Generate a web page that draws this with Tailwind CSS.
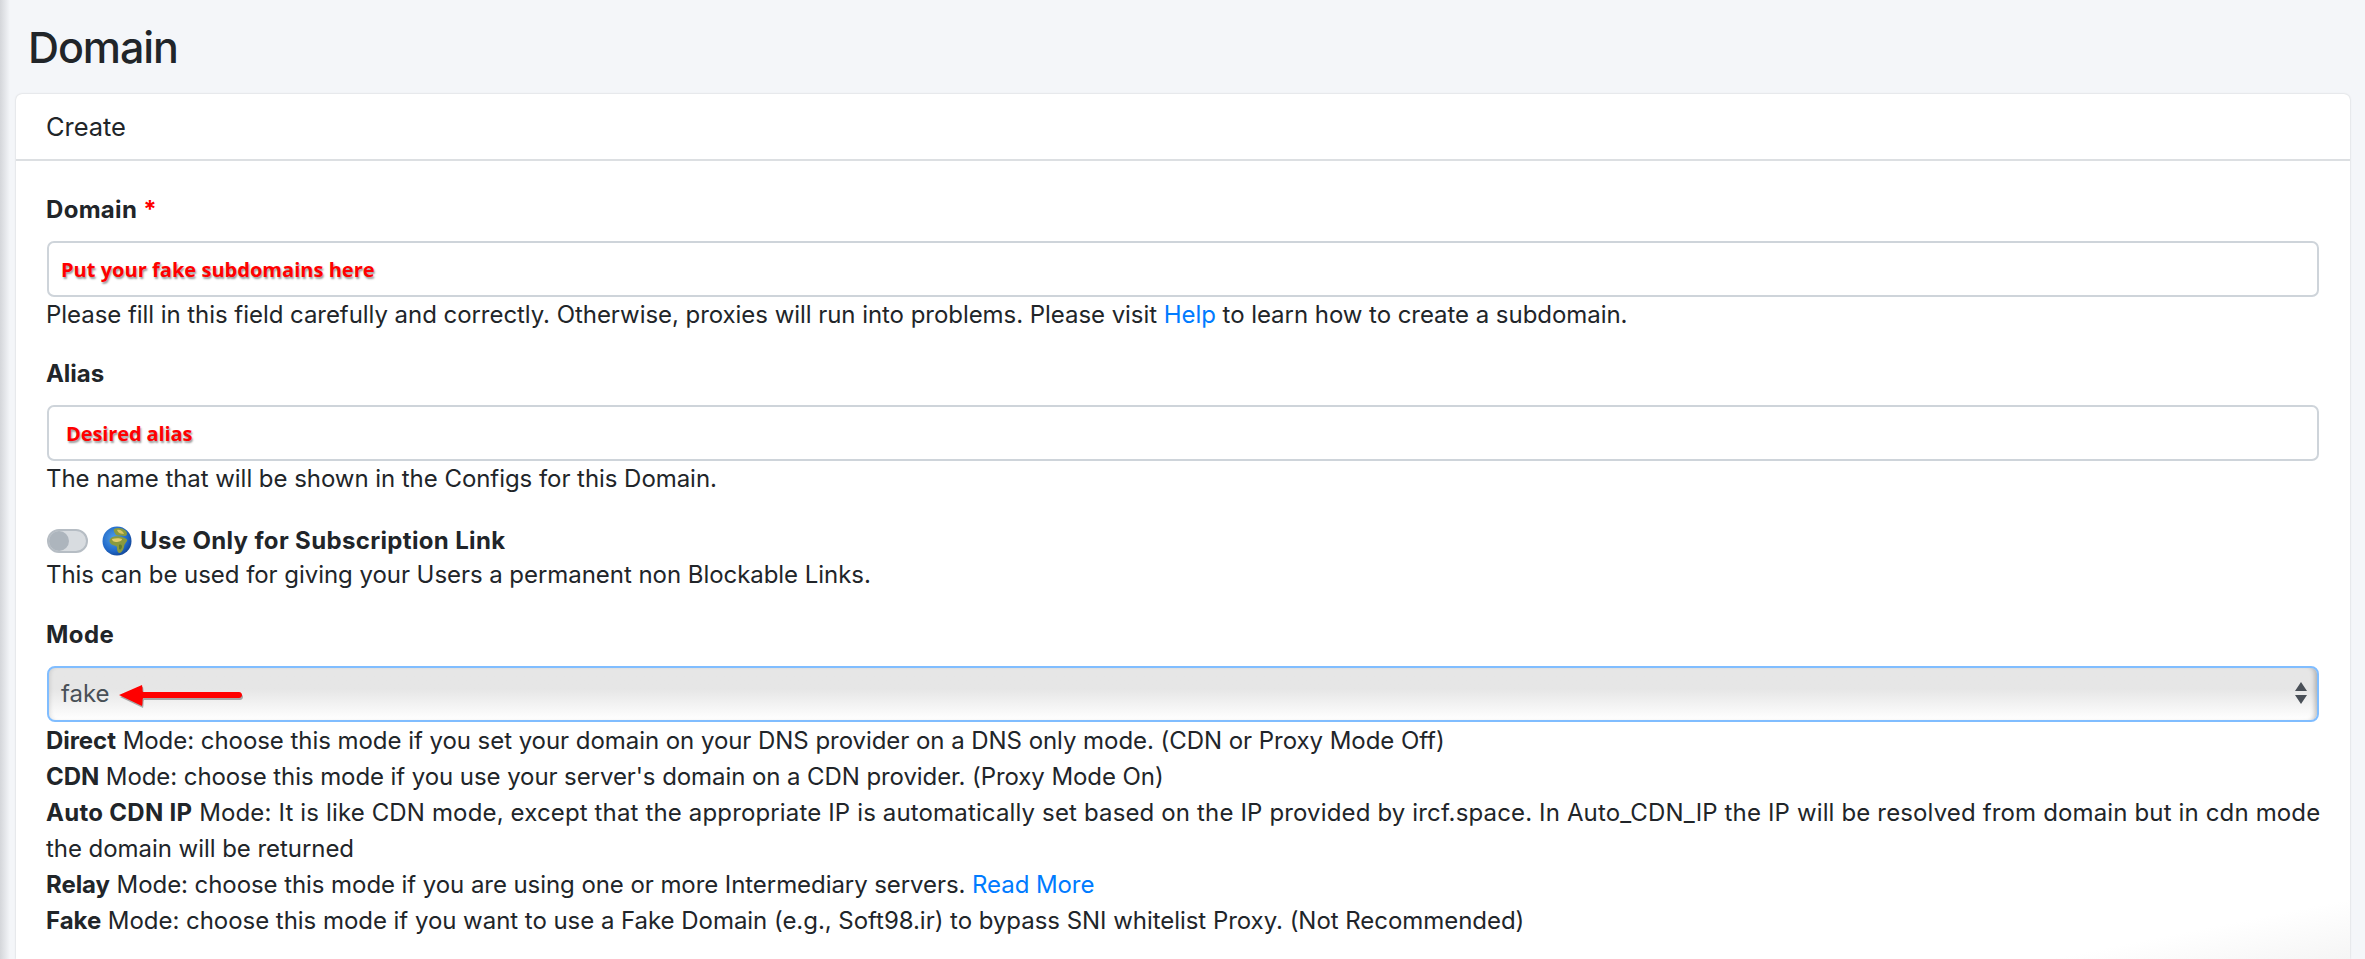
<!DOCTYPE html>
<html lang="en">
<head>
  <meta charset="UTF-8" />
  <title>Domain</title>
  <script src="https://cdn.jsdelivr.net/npm/@tailwindcss/browser@4"></script>
</head>
<body class="relative w-[2365px] h-[959px] overflow-hidden bg-[#f4f6f9] text-[#212529] font-['Inter',sans-serif] text-[24px] leading-[36px] tracking-[-0.05px]">
  <!-- sidebar shadow on the left edge -->
  <div class="absolute left-0 top-0 h-full w-[10px] bg-gradient-to-r from-[#d4d6da] to-[#f4f6f9]"></div>

  <div class="relative pl-[16px] pr-[15px]">
    <h1 class="pl-[12px] pt-[22px] h-[94px] text-[43px] leading-[50px] font-medium tracking-[-1.1px]">Domain</h1>

    <div class="relative h-[865px] rounded-t-[6px] bg-white shadow-[0_0_2px_rgba(0,0,0,0.2)] overflow-hidden">
      <!-- faint shade in the bottom right corner -->
      <div class="absolute right-0 bottom-0 w-[300px] h-[60px] bg-gradient-to-tl from-[#f5f5f5] to-white/0 to-50%"></div>

      <div class="h-[67px] border-b-2 border-[#dcdfe2] pl-[30px] flex items-center text-[25.5px]">Create</div>

      <div class="relative pl-[30px] pr-[31px]">
        <label class="block mt-[31px] font-bold leading-[36px] tracking-[0.3px]">Domain <span class="text-[#f00]">*</span></label>
        <div class="mt-[13px] ml-[1px] h-[56px] rounded-[7px] border-2 border-[#ced4da] flex items-center pl-[12px]">
          <span class="relative top-[1px] font-['Open_Sans',sans-serif] font-bold text-[20px] tracking-[0.03px] text-[#f00] [text-shadow:1px_2px_2px_rgba(0,0,0,0.4)]">Put your fake subdomains here</span>
        </div>
        <p>Please fill in this field carefully and correctly. Otherwise, proxies will run into problems. Please visit <a class="text-[#007bff]">Help</a> to learn how to create a subdomain.</p>

        <label class="block mt-[23px] font-bold">Alias</label>
        <div class="mt-[13px] ml-[1px] h-[56px] rounded-[7px] border-2 border-[#ced4da] flex items-center pl-[17px]">
          <span class="relative top-[1px] font-['Open_Sans',sans-serif] font-bold text-[20px] tracking-[-0.1px] text-[#f00] [text-shadow:1px_2px_2px_rgba(0,0,0,0.4)]">Desired alias</span>
        </div>
        <p>The name that will be shown in the Configs for this Domain.</p>

        <div class="mt-[26px] ml-[1px] flex items-center h-[36px]">
          <span class="relative block w-[41px] h-[24px] rounded-full bg-[#d8dce0] border-2 border-[#b6bdc4]">
            <span class="absolute left-0 top-0 w-[20px] h-[20px] rounded-full bg-[#adb5bd]"></span>
          </span>
          <svg class="ml-[14px] w-[30px] h-[30px]" viewBox="0 0 30 30">
            <defs>
              <radialGradient id="sea" cx="0.4" cy="0.4" r="0.7">
                <stop offset="0" stop-color="#4f9fe8" />
                <stop offset="0.65" stop-color="#2068c8" />
                <stop offset="1" stop-color="#0f3c88" />
              </radialGradient>
            </defs>
            <circle cx="15" cy="15" r="14.5" fill="url(#sea)" />
            <!-- europe -->
            <path d="M12 3 C16 1 21 2 24 5 C26 8 25 10 22 10 C19 9 16 10 14 9 C13 7 11 5 12 3 Z" fill="#8a9a3e" />
            <path d="M15 4 C18 3 21 5 22 8 C19 8 16 7 15 4 Z" fill="#d9c463" />
            <!-- africa -->
            <path d="M9 12 C11 10 17 10 20 11 C23 12 26 13 25 15 C24 17 22 18 22 21 C21 25 19 27 17 27 C15 26 15 23 15 21 C14 19 11 20 9 18 C7 16 7 14 9 12 Z" fill="#8a9a3e" />
            <path d="M10 13 C13 12 18 12 20 13 C20 15 17 16 14 16 C12 16 10 15 10 13 Z" fill="#e3cd6d" />
            <path d="M17 19 C19 18 20 19 20 21 C19 24 18 24 17 23 Z" fill="#5f7d2f" />
          </svg>
          <label class="ml-[8px] font-bold tracking-[0.35px]">Use Only for Subscription Link</label>
        </div>
        <p class="mt-[-2px]">This can be used for giving your Users a permanent non Blockable Links.</p>

        <label class="block mt-[24px] font-bold tracking-[0.4px]">Mode</label>
        <div class="relative mt-[13px] ml-[1px] h-[56px] rounded-[8px] border-2 border-[#80bdff] flex items-center pl-[12px] text-[#495057] bg-gradient-to-b from-[#e6e6e6] from-40% to-white shadow-[inset_-6px_0_5px_-4px_rgba(0,0,0,0.25),inset_3px_0_4px_-2px_rgba(0,0,0,0.12)]">
          fake
          <!-- red annotation arrow -->
          <svg class="absolute left-[69px] top-[17px] w-[130px] h-[26px]" viewBox="0 0 130 26">
            <path d="M1 10 L24 0 C25 4 24 6 25 7 L121 7 C125 7 125 13 121 13 L25 13 C24 15 25 18 24 21 Z" transform="translate(1 2)" fill="#000" opacity="0.3" />
            <path d="M1 10 L24 0 C25 4 24 6 25 7 L121 7 C125 7 125 13 121 13 L25 13 C24 15 25 18 24 21 Z" fill="#f00" />
          </svg>
          <svg class="absolute right-[9px] top-[14px] w-[14px] h-[23px]" viewBox="0 0 14 23">
            <path d="M7 0 L13 9 L1 9 Z M1 13 L13 13 L7 22 Z" fill="#4a5058" />
          </svg>
        </div>

        <div class="mt-[1px]">
          <p><b class="font-bold">Direct</b> Mode: choose this mode if you set your domain on your DNS provider on a DNS only mode. (CDN or Proxy Mode Off)</p>
          <p class="tracking-[-0.08px]"><b class="font-bold">CDN</b> Mode: choose this mode if you use your server's domain on a CDN provider. (Proxy Mode On)</p>
          <p class="whitespace-nowrap"><b class="font-bold tracking-[0.3px]">Auto CDN IP</b> <span class="tracking-[0.145px]">Mode: It is like CDN mode, except that the appropriate IP is automatically set based on the IP provided by ircf.space. In Auto_CDN_IP the IP will be resolved from domain but in cdn mode</span><br />the domain will be returned</p>
          <p class="tracking-[-0.07px]"><b class="font-bold">Relay</b> Mode: choose this mode if you are using one or more Intermediary servers. <a class="text-[#007bff]">Read More</a></p>
          <p class="tracking-[-0.04px]"><b class="font-bold">Fake</b> Mode: choose this mode if you want to use a Fake Domain (e.g., Soft98.ir) to bypass SNI whitelist Proxy. (Not Recommended)</p>
        </div>
      </div>
    </div>
  </div>
</body>
</html>
